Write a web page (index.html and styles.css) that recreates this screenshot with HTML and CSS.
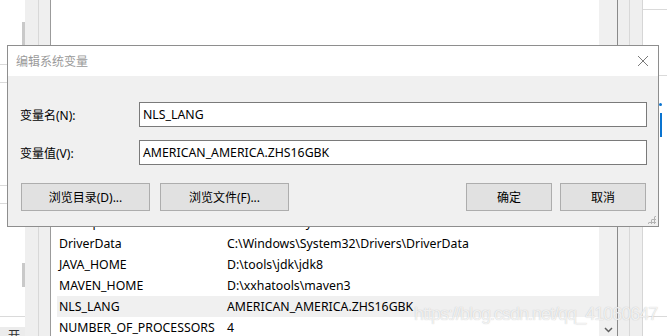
FILE: index.html
```html
<!DOCTYPE html>
<html lang="zh-CN">
<head>
    <meta charset="UTF-8">
    <title>编辑系统变量</title>
    <link rel="stylesheet" href="styles.css">
</head>
<body>
    <div class="desktop">
        <!-- left pane behind -->
        <div class="left-pane">
            <div class="hline" style="top: 64px"></div>
            <div class="hline" style="top: 82px"></div>
            <div class="hline" style="top: 185px"></div>
            <div class="hline" style="top: 203px"></div>
            <div class="hline" style="top: 316px"></div>
            <div class="thumb" style="top: 22px"></div>
            <div class="thumb" style="top: 263px"></div>
            <div class="start-bar">开始</div>
        </div>

        <div class="side-col left-col"></div>
        <div class="side-col right-col"></div>

        <!-- right pane behind -->
        <div class="right-pane">
            <div class="hline" style="top: 9px"></div>
            <div class="hline" style="top: 75px"></div>
            <div class="hline" style="top: 316px"></div>
            <div class="blue-dot"></div>
            <div class="blue-bar"></div>
        </div>

        <!-- environment variable list -->
        <div class="main-win">
            <div class="var-list">
                <div class="var-row"><span>ComSpec</span><span>C:\Windows\system32\cmd.exe</span></div>
                <div class="var-row"><span>DriverData</span><span>C:\Windows\System32\Drivers\DriverData</span></div>
                <div class="var-row"><span>JAVA_HOME</span><span>D:\tools\jdk\jdk8</span></div>
                <div class="var-row"><span>MAVEN_HOME</span><span>D:\xxhatools\maven3</span></div>
                <div class="var-row selected"><span>NLS_LANG</span><span>AMERICAN_AMERICA.ZHS16GBK</span></div>
                <div class="var-row"><span>NUMBER_OF_PROCESSORS</span><span>4</span></div>
            </div>
            <div class="scrollbar">
                <svg class="arrow" width="9" height="6" viewBox="0 0 9 6">
                    <path d="M1 1 L4.5 4.5 L8 1" fill="none" stroke="#606060" stroke-width="1.5"/>
                </svg>
            </div>
        </div>

        <!-- dialog -->
        <div class="dialog">
            <div class="titlebar">
                <span class="title">编辑系统变量</span>
                <svg class="close" width="12" height="12" viewBox="0 0 12 12">
                    <path d="M1 1 L11 11 M11 1 L1 11" stroke="#7a7a7a" stroke-width="1"/>
                </svg>
            </div>
            <div class="dialog-body">
                <div class="field">
                    <label class="field-label">变量名(N):</label>
                    <div class="input">NLS_LANG</div>
                </div>
                <div class="field">
                    <label class="field-label">变量值(V):</label>
                    <div class="input">AMERICAN_AMERICA.ZHS16GBK</div>
                </div>
                <div class="buttons">
                    <div class="btn-group">
                        <button class="btn wide">浏览目录(D)...</button>
                        <button class="btn wide">浏览文件(F)...</button>
                    </div>
                    <div class="btn-group">
                        <button class="btn">确定</button>
                        <button class="btn">取消</button>
                    </div>
                </div>
            </div>
            <div class="grip"></div>
        </div>

        <div class="watermark">https://blog.csdn.net/qq_41060647</div>
    </div>
</body>
</html>
```

FILE: styles.css
```css
body {
    margin: 0;
    font-family: "Noto Sans", "Noto Sans CJK SC", sans-serif;
    font-size: 12px;
    color: #000;
    background: #fff;
}

.desktop {
    position: relative;
    width: 667px;
    height: 336px;
    overflow: hidden;
    background: #fff;
}

.left-pane {
    position: absolute;
    left: 0;
    top: 0;
    width: 25px;
    height: 336px;
}

.right-pane {
    position: absolute;
    left: 643px;
    top: 0;
    width: 24px;
    height: 336px;
}

.hline {
    position: absolute;
    left: 0;
    right: 0;
    height: 1px;
    background: #dadada;
}

.thumb {
    position: absolute;
    left: 22px;
    width: 3px;
    height: 24px;
    background: #c9c9c9;
}

.start-bar {
    position: absolute;
    left: 0;
    top: 327px;
    width: 25px;
    height: 9px;
    background: #ececec;
    font-size: 12px;
    line-height: 1;
    padding: 3px 0 0 8px;
    box-sizing: border-box;
    overflow: hidden;
    color: #333;
}

.side-col {
    position: absolute;
    top: 0;
    width: 25px;
    height: 336px;
    background: #efefef;
}

.left-col {
    left: 25px;
    border-right: 1px solid #9b9b9b;
    width: 25px;
}

.left-col::after,
.right-col::after {
    content: "";
    position: absolute;
    top: 0;
    bottom: 0;
    left: 13px;
    width: 1px;
    background: #d8d8d8;
}

.right-col {
    left: 617px;
    border-left: 1px solid #8a8a8a;
    border-right: 1px solid #d6d6d6;
    width: 24px;
}

.right-col::after {
    left: 11px;
}

.blue-dot {
    position: absolute;
    left: 16px;
    top: 103px;
    width: 3px;
    height: 3px;
    border-radius: 50%;
    background: #0a74d0;
}

.blue-bar {
    position: absolute;
    left: 17px;
    top: 113px;
    width: 2px;
    height: 24px;
    background: #0a74d0;
}

.main-win {
    position: absolute;
    left: 52px;
    top: 0;
    width: 565px;
    height: 336px;
    display: flex;
    background: #fff;
}

.var-list {
    flex: 1;
    padding-top: 212px;
}

.var-row {
    display: grid;
    grid-template-columns: 168px 1fr;
    height: 21px;
    line-height: 21px;
    margin-left: 5px;
    padding-left: 2px;
    white-space: nowrap;
    font-size: 12.3px;
}

.var-row.selected {
    background: #f0f0f0;
}

.scrollbar {
    width: 18px;
    background: #f0f0f0;
    display: flex;
    flex-direction: column;
    justify-content: flex-end;
    align-items: center;
}

.scrollbar .arrow {
    margin-bottom: 3px;
}

.dialog {
    position: absolute;
    left: 7px;
    top: 45px;
    width: 650px;
    height: 180px;
    border: 1px solid #8e8e8e;
    background: #f0f0f0;
    display: flex;
    flex-direction: column;
}

.titlebar {
    height: 30px;
    background: #fff;
    display: flex;
    align-items: center;
    justify-content: space-between;
    padding: 0 9px 0 8px;
}

.title {
    color: #9a9a9a;
    font-size: 12px;
}

.dialog-body {
    padding: 26px 11px 0 12px;
    display: flex;
    flex-direction: column;
    gap: 13px;
}

.field {
    display: flex;
    align-items: center;
}

.field-label {
    width: 119px;
}

.input {
    flex: 1;
    height: 23px;
    line-height: 23px;
    border: 1px solid #7a7a7a;
    background: #fff;
    padding-left: 3px;
    font-size: 12.3px;
}

.buttons {
    display: flex;
    justify-content: space-between;
    margin-top: 5px;
    padding-left: 1px;
    padding-right: 1px;
}

.btn-group {
    display: flex;
    gap: 8px;
}

.btn-group:first-child {
    gap: 10px;
}

.btn {
    width: 86px;
    height: 28px;
    background: #e1e1e1;
    border: 1px solid #adadad;
    font-family: inherit;
    font-size: 12px;
    color: #000;
    padding: 0;
}

.btn.wide {
    width: 129px;
}

.grip {
    position: absolute;
    right: 2px;
    bottom: 2px;
    width: 9px;
    height: 9px;
    background:
        radial-gradient(circle, #b4b4b4 1px, transparent 1.2px) 0 0 / 3px 3px;
    clip-path: polygon(100% 0, 100% 100%, 0 100%);
}

.watermark {
    position: absolute;
    left: 414px;
    top: 304px;
    font-family: "Liberation Sans", Arial, sans-serif;
    font-size: 18px;
    letter-spacing: -1px;
    color: rgba(255, 255, 255, 0.75);
    text-shadow: 0 0 1px rgba(150, 150, 150, 0.6);
    white-space: nowrap;
}
```
